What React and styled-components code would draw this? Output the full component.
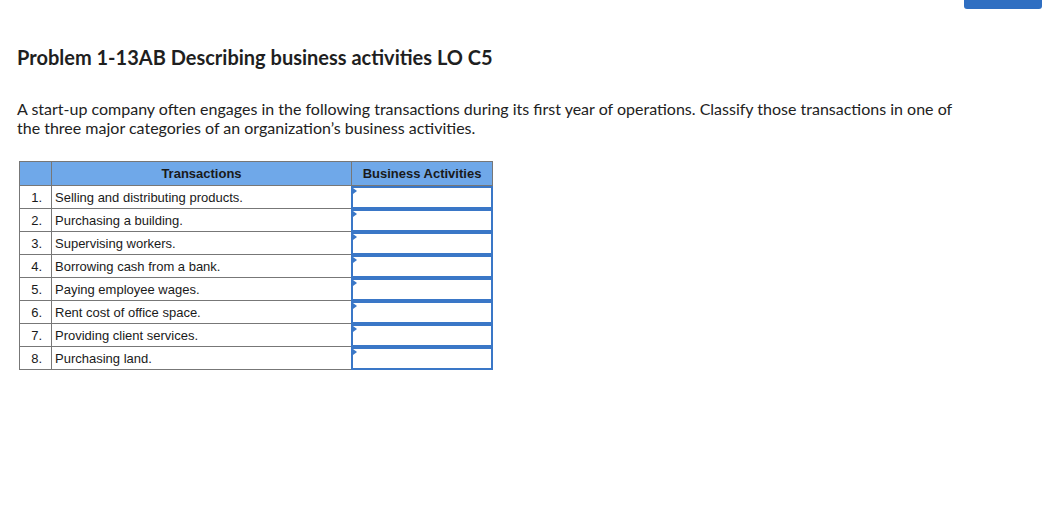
import React from "react";
import styled, { createGlobalStyle } from "styled-components";

const Global = createGlobalStyle`
  html, body { margin: 0; padding: 0; background: #fff; }
  body { font-family: Lato, "Open Sans", sans-serif; color: #222; }
`;

const Page = styled.div`
  position: relative;
  width: 1042px;
  height: 522px;
  padding: 45px 0 0 17px;
  box-sizing: border-box;
`;

const TopButton = styled.div`
  position: absolute;
  top: 0;
  right: 0;
  width: 78px;
  height: 9px;
  background: #2f6fc2;
  border-radius: 0 0 3px 3px;
`;

const Title = styled.h1`
  margin: 0;
  font-size: 20px;
  font-weight: 700;
  line-height: 24px;
  color: #1f1f1f;
`;

const Intro = styled.p`
  margin: 30px 0 0;
  font-size: 16px;
  line-height: 19px;
  color: #222;
  width: 936px;
`;

const Table = styled.table`
  margin: 24px 0 0 2px;
  border-collapse: collapse;
  font-family: "Liberation Sans", Arial, sans-serif;
  font-size: 13px;
  color: #1a1a1a;
`;

const HeadCell = styled.th`
  background: #6fa8e9;
  border: 1px solid #777;
  height: 24px;
  padding: 0 6px;
  font-weight: 700;
  text-align: center;
  width: ${(p) => p.$w}px;
  box-sizing: border-box;
`;

const NumCell = styled.td`
  border: 1px solid #777;
  height: 23px;
  width: 32px;
  padding: 0 9px 0 0;
  text-align: right;
  box-sizing: border-box;
`;

const TextCell = styled.td`
  border: 1px solid #777;
  padding: 0 3px;
  width: 300px;
  box-sizing: border-box;
`;

const InputCell = styled.td`
  border: 1px solid #777;
  padding: 0;
  width: 141px;
  height: 23px;
  box-sizing: border-box;
`;

const InputBox = styled.div`
  position: relative;
  height: 23px;
  border: 2px solid #3a77c7;
  box-sizing: border-box;
  background: #fff;
  margin: -1px;
`;

const Flag = styled.span`
  position: absolute;
  top: 0;
  left: 0;
  width: 0;
  height: 0;
  border-top: 3px solid transparent;
  border-bottom: 3px solid transparent;
  border-left: 4px solid #3a77c7;
`;

const rows = [
  "Selling and distributing products.",
  "Purchasing a building.",
  "Supervising workers.",
  "Borrowing cash from a bank.",
  "Paying employee wages.",
  "Rent cost of office space.",
  "Providing client services.",
  "Purchasing land.",
];

export default function App() {
  return (
    <Page>
      <Global />
      <TopButton />
      <Title>Problem 1-13AB Describing business activities LO C5</Title>
      <Intro>
        A start-up company often engages in the following transactions during its first year of operations. Classify those transactions in one of the three major categories of an organization’s business activities.
      </Intro>
      <Table>
        <thead>
          <tr>
            <HeadCell $w={32} />
            <HeadCell $w={300}>Transactions</HeadCell>
            <HeadCell $w={141}>Business Activities</HeadCell>
          </tr>
        </thead>
        <tbody>
          {rows.map((r, i) => (
            <tr key={i}>
              <NumCell>{i + 1}.</NumCell>
              <TextCell>{r}</TextCell>
              <InputCell>
                <InputBox>
                  <Flag />
                </InputBox>
              </InputCell>
            </tr>
          ))}
        </tbody>
      </Table>
    </Page>
  );
}
